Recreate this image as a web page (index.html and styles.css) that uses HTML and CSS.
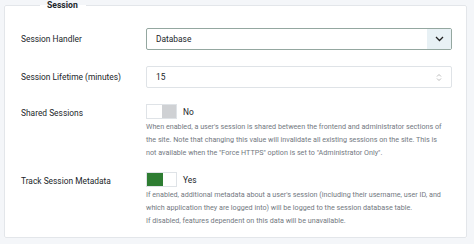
FILE: index.html
```html
<!DOCTYPE html>
<html lang="en">

<head>
  <meta charset="UTF-8">
  <meta name="viewport" content="width=device-width, initial-scale=1.0">
  <title>Session</title>
  <link rel="stylesheet" href="styles.css">
</head>

<body>
  <fieldset class="options-fieldset">
    <legend>Session</legend>

    <div class="control-group">
      <div class="control-label">Session Handler</div>
      <div class="controls">
        <div class="form-select">
          <span class="select-value">Database</span>
          <span class="select-arrow">
            <svg width="9" height="6" viewBox="0 0 9 6">
              <path d="M1 1l3.5 3.5 3.5-3.5" fill="none" stroke="#222" stroke-width="1.3" />
            </svg>
          </span>
        </div>
      </div>
    </div>

    <div class="control-group">
      <div class="control-label">Session Lifetime (minutes)</div>
      <div class="controls">
        <div class="form-number">
          <span>15</span>
          <span class="spinner">
            <svg width="6" height="9" viewBox="0 0 6 9">
              <path d="M1 3.5l2-2 2 2M1 5.5l2 2 2-2" fill="none" stroke="#aaa" stroke-width="0.8" />
            </svg>
          </span>
        </div>
      </div>
    </div>

    <div class="control-group control-group--switch">
      <div class="control-label">Shared Sessions</div>
      <div class="controls">
        <div class="switcher">
          <span class="switch switch--off"><span class="knob"></span></span>
          <span class="switch-text">No</span>
        </div>
        <div class="form-text">
          When enabled, a user's session is shared between the frontend and administrator sections of
          the site. Note that changing this value will invalidate all existing sessions on the site. This is
          not available when the "Force HTTPS" option is set to "Administrator Only".
        </div>
      </div>
    </div>

    <div class="control-group control-group--switch">
      <div class="control-label">Track Session Metadata</div>
      <div class="controls">
        <div class="switcher">
          <span class="switch switch--on"><span class="knob"></span></span>
          <span class="switch-text">Yes</span>
        </div>
        <div class="form-text">
          If enabled, additional metadata about a user's session (including their username, user ID, and
          which application they are logged into) will be logged to the session database table.<br>
          If disabled, features dependent on this data will be unavailable.
        </div>
      </div>
    </div>
  </fieldset>
</body>

</html>
```

FILE: styles.css
```css
body {
  margin: 0;
  background: #f4f6f9;
  font-family: Roboto, "Liberation Sans", sans-serif;
  color: #22262a;
}

.options-fieldset {
  margin: 0 7px 0 4px;
  padding: 18px 14px 10px 16px;
  border: 1px solid #e3e6ea;
  background: #fff;
  border-radius: 2px;
  min-width: 0;
}

.options-fieldset legend {
  margin-left: 19px;
  padding: 0 8px 0 7px;
  font-size: 8.6px;
  font-weight: 700;
  line-height: 10px;
  color: #22262a;
}

.control-group {
  display: flex;
  margin-bottom: 16px;
}

.control-group--switch {
  margin-bottom: 13px;
}

.control-group:last-child {
  margin-bottom: 0;
}

.control-label {
  width: 125px;
  flex: none;
  font-size: 8.4px;
  color: #22262a;
  line-height: 22px;
}

.control-group--switch .control-label {
  line-height: 17px;
  padding-top: 1px;
}

.controls {
  flex: 1;
  min-width: 0;
}

.form-select,
.form-number {
  height: 22px;
  box-sizing: border-box;
  display: flex;
  align-items: center;
  font-size: 8.4px;
  color: #22262a;
  border-radius: 2px;
}

.form-select {
  border: 1px solid #94a7a0;
}

.select-value {
  flex: 1;
  padding-left: 9px;
}

.select-arrow {
  width: 24px;
  height: 100%;
  display: flex;
  align-items: center;
  justify-content: center;
  background: #e8f1f5;
}

.form-number {
  border: 1px solid #dfe3e7;
  padding: 0 9px;
  justify-content: space-between;
}

.spinner {
  display: flex;
  align-items: center;
}

.switcher {
  display: flex;
  align-items: center;
  height: 15px;
}

.switch {
  width: 31px;
  height: 15px;
  box-sizing: border-box;
  border: 1px solid #dfe3e7;
  display: flex;
}

.knob {
  width: 14px;
  height: 100%;
}

.switch--off {
  background: #fff;
  justify-content: flex-end;
}

.switch--off .knob {
  background: #cfd1d4;
}

.switch--on {
  background: #fff;
}

.switch--on .knob {
  width: 16px;
  background: #2e7d32;
}

.switch-text {
  margin-left: 6px;
  font-size: 8.4px;
  color: #22262a;
}

.form-text {
  max-width: 302px;
  margin-top: 1px;
  font-size: 7.2px;
  line-height: 13px;
  color: #73797f;
}
```
